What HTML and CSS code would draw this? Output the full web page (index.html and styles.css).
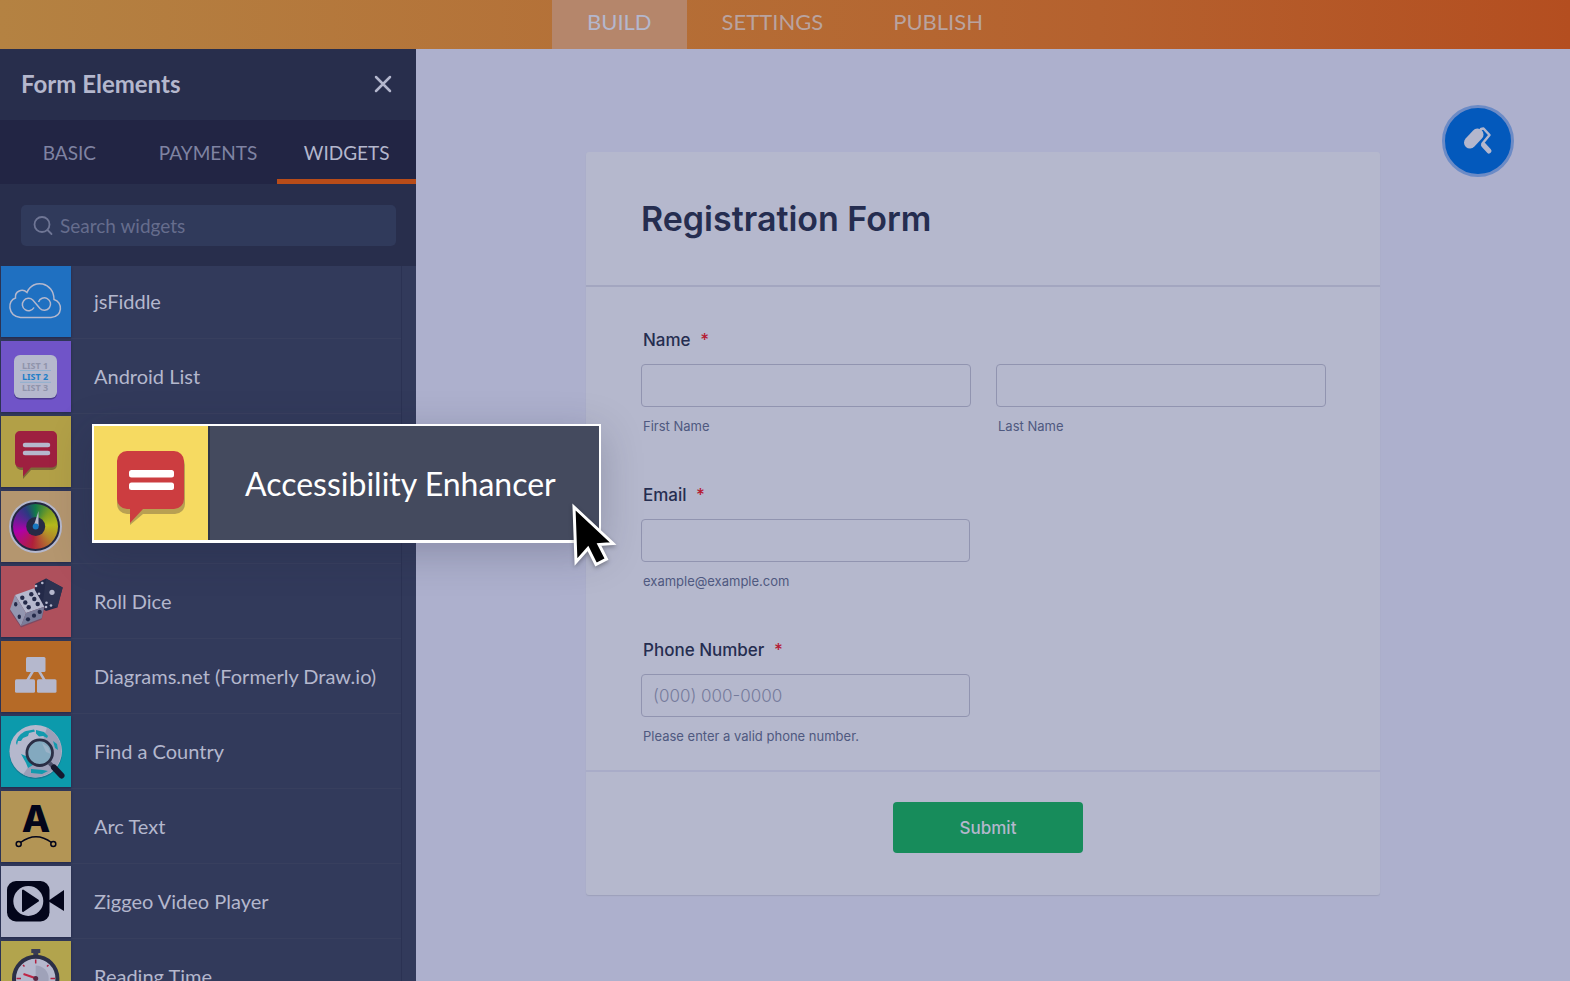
FILE: index.html
```html
<!DOCTYPE html>
<html lang="en" dir="ltr">
<head>
<meta charset="utf-8">
<title>Form Builder</title>
<link rel="stylesheet" href="styles.css">
</head>
<body>
<nav class="topbar">
  <a class="active" href="#build">BUILD</a>
  <a href="#settings">SETTINGS</a>
  <a href="#publish">PUBLISH</a>
</nav>
<div class="wrapper">
  <!-- left panel -->
  <aside class="panel">
    <header class="panel-header">
      <h2>Form Elements</h2>
      <button class="close" type="button" aria-label="Close">
        <svg width="18" height="18" viewBox="0 0 18 18"><path d="M2 2l14 14M16 2L2 16"/></svg>
      </button>
    </header>
    <div class="tabs">
      <button type="button">BASIC</button>
      <button type="button">PAYMENTS</button>
      <button type="button" class="active">WIDGETS</button>
    </div>
    <div class="search">
      <label class="search-box">
        <svg width="20" height="20" viewBox="0 0 20 20"><circle cx="9" cy="8.500" r="7.500"/><path d="M14.500 14l4 4"/></svg>
        <input type="text" placeholder="Search widgets" aria-label="Search widgets">
      </label>
    </div>
    <div class="list">
      <ul>
        <li>
          <svg class="icon blue" viewBox="0 0 70 71">
            <g fill="none" stroke="#b5b8cd" stroke-width="1.500">
              <path d="M19.500 51.500C6 50 6.500 34 14.500 32C13.500 25 21.500 22 26 26.500C32 12 53 16 53 33.500C62 36 62 50.500 50 51.500Z"/>
              <path d="M33 41.500A6.200 6.200 0 1 1 31.800 34L39 42.500A6.200 6.200 0 1 0 37.500 36"/>
            </g>
          </svg>
          <span>jsFiddle</span>
        </li>
        <li>
          <svg class="icon purple" viewBox="0 0 70 71">
            <rect x="13" y="15.500" width="43" height="43" rx="6" fill="#4b3a8f"/>
            <rect x="13" y="14" width="43" height="43" rx="6" fill="#b5b8cd"/>
            <path d="M19 29.500h31M19 41.300h31" stroke="#8fb0cf"/>
            <g class="list-text">
              <text x="34" y="27.500">LIST 1</text>
              <text x="34" y="38.500" fill="#1f7fc8">LIST 2</text>
              <text x="34" y="49.500">LIST 3</text>
            </g>
          </svg>
          <span>Android List</span>
        </li>
        <li>
          <svg class="icon olive" viewBox="0 0 70 71">
            <path d="M20 17h31a5 5 0 0 1 5 5v27a5 5 0 0 1-5 5H30l-8 9v-9h-2a5 5 0 0 1-5-5V22a5 5 0 0 1 5-5z" fill="#7d6b38"/>
            <path d="M19 15h32a5 5 0 0 1 5 5v26.500a5 5 0 0 1-5 5H30l-8 9v-9h-3a5 5 0 0 1-5-5V20a5 5 0 0 1 5-5z" fill="#9e2040"/>
            <path d="M24 29h23M24 37h23" stroke="#b5b8cd" stroke-width="4.500" stroke-linecap="round"/>
          </svg>
          <span></span>
        </li>
        <li>
          <div class="icon sand">
            <div class="wheel"></div>
            <svg viewBox="0 0 70 71">
              <circle cx="34.700" cy="35.500" r="9.500" fill="#262a45"/>
              <path d="M33 34L37.500 20L37.500 35z" fill="#b5b8cd"/>
              <circle cx="34.700" cy="35.500" r="3" fill="#1878c0"/>
            </svg>
          </div>
          <span></span>
        </li>
        <li>
          <svg class="icon rose" viewBox="0 0 70 71">
            <path d="M34 18l11-5.500 16.700 9-5.400 20L45 45 34 38z" fill="#242a49"/>
            <path d="M45 12.500l16.700 9-5.400 20L42 35.500z" fill="#2c3250"/>
            <g fill="#b5b8cd">
              <circle cx="51" cy="26.300" r="2.600"/><circle cx="35" cy="20" r="1.300"/><circle cx="41.300" cy="17" r="1.300"/>
              <circle cx="38" cy="27.700" r="1.300"/><circle cx="45.500" cy="36.800" r="1.300"/><circle cx="50" cy="39.500" r="1.300"/><circle cx="45" cy="41" r="1.300"/>
            </g>
            <path d="M14 30l19-7 10.500 18.500-2.800 12L20 61.500 9 45z" fill="#7d4a62"/>
            <path d="M14 29l19-6.700 10.300 18.400L25 47z" fill="#b5b8cd"/>
            <path d="M14 29l11 18-5 13L9 43.300z" fill="#9396b0"/>
            <path d="M25 47l18.300-6.300-2.600 11.600L20 60z" fill="#797c99"/>
            <g fill="#242a49">
              <circle cx="21.300" cy="31.700" r="2.200"/><circle cx="30.300" cy="28.300" r="2.200"/><circle cx="24.300" cy="36.500" r="2.200"/>
              <circle cx="33.300" cy="33" r="2.200"/><circle cx="27.700" cy="41.300" r="2.200"/><circle cx="36.700" cy="38" r="2.200"/>
              <circle cx="27" cy="53.300" r="2.100"/><circle cx="33" cy="49.700" r="2.100"/><circle cx="38.700" cy="45.900" r="2.100"/>
              <ellipse cx="14.700" cy="38.300" rx="1.700" ry="2.300"/><ellipse cx="18.300" cy="50.700" rx="1.700" ry="2.300"/>
            </g>
          </svg>
          <span>Roll Dice</span>
        </li>
        <li>
          <svg class="icon orange" viewBox="0 0 70 71">
            <path d="M32 30l-6 10M38 30l6 10" stroke="#b5b8cd" stroke-width="2.500"/>
            <g fill="#b5b8cd">
              <rect x="25" y="16" width="19.500" height="15" rx="1.500"/>
              <rect x="14" y="38.300" width="20" height="13.500" rx="1.500"/>
              <rect x="36" y="38.300" width="19.500" height="13.500" rx="1.500"/>
            </g>
          </svg>
          <span>Diagrams.net (Formerly Draw.io)</span>
        </li>
        <li>
          <svg class="icon teal" viewBox="0 0 70 71">
            <circle cx="34.700" cy="36.500" r="26.500" fill="#147c93"/>
            <circle cx="34.700" cy="35.300" r="26.300" fill="#b5b8cd"/>
            <path d="M46 11.500A26.300 26.300 0 0 1 22 58.500L38 36z" fill="#9c9fb8"/>
            <g fill="#129aae">
              <path d="M15 27c1-6 5-10 10-12l8-1.500 1 2-6 1.500-1 3-5 2-2 3-3 0-1 4z"/>
              <path d="M35 14l8 2 4 4-1 2-4-2-4 .5-3-3z"/>
              <path d="M52 25l4 3 1 6-3-2z"/>
              <path d="M20 38l7 3 5 8-5 3-2-5z"/>
              <path d="M30 53l12 1 5 1-6 3-11-1z"/>
            </g>
            <circle cx="38.700" cy="36.700" r="12.500" fill="#83a9bf"/>
            <path d="M41 27l6 4 3 7-5-2z" fill="#9cb3c8"/>
            <circle cx="38.700" cy="36.700" r="12.800" fill="none" stroke="#2a2e45" stroke-width="2.800"/>
            <path d="M48.500 47l4 4" stroke="#4a4e68" stroke-width="4"/>
            <path d="M53 51.500l7.500 8" stroke="#15182e" stroke-width="6" stroke-linecap="round"/>
          </svg>
          <span>Find a Country</span>
        </li>
        <li>
          <svg class="icon gold" viewBox="0 0 70 71">
            <text class="arc-letter" x="35" y="41">A</text>
            <g fill="none" stroke="#03051a" stroke-width="1.500">
              <path d="M19.500 51.500Q35 40 50.500 51.500"/>
              <circle cx="17.700" cy="53" r="2.500"/><circle cx="52.300" cy="53" r="2.500"/>
            </g>
          </svg>
          <span>Arc Text</span>
        </li>
        <li>
          <svg class="icon light" viewBox="0 0 70 71">
            <rect x="6" y="15" width="42.500" height="40.500" rx="9" fill="#03051a"/>
            <circle cx="27.300" cy="35" r="15" fill="#b5b8cd"/>
            <path d="M22 24.500v20.500l15-10.300z" fill="#03051a" stroke="#03051a" stroke-width="2" stroke-linejoin="round"/>
            <path d="M47 35l16-11v21z" fill="#03051a"/>
          </svg>
          <span>Ziggeo Video Player</span>
        </li>
        <li>
          <svg class="icon lime" viewBox="0 0 70 71">
            <path d="M30.300 8h9v4h-2v4h-5v-4h-2z" fill="#383c54"/>
            <circle cx="34.700" cy="37.500" r="21.700" fill="#b5b8cd" stroke="#2b2f47" stroke-width="4"/>
            <path d="M34.700 24.500a13 13 0 0 1 0 26z" fill="#9fa2b9"/>
            <path d="M34.700 18.500v4M15.500 37.500h4.500M49.500 37.500h4.500M22 24l1.500 1.500M47.500 24L46 25.500" stroke="#b02040" stroke-width="1.500"/>
            <path d="M22.500 33l13 4.500" stroke="#c02445" stroke-width="2"/>
            <circle cx="34.700" cy="37.500" r="2.500" fill="#5a2a45"/>
          </svg>
          <span>Reading Time</span>
        </li>
      </ul>
    </div>
  </aside>

  <!-- form preview -->
  <main class="stage">
    <form class="form">
      <div class="form-head">
        <h1>Registration Form</h1>
      </div>
      <div class="form-body">
        <fieldset>
          <legend>Name <b>*</b></legend>
          <div class="names">
            <div><input id="first" type="text"><label class="sub" for="first">First Name</label></div>
            <div><input id="last" type="text"><label class="sub" for="last">Last Name</label></div>
          </div>
        </fieldset>
        <div class="field">
          <label for="email">Email <b>*</b></label>
          <input id="email" type="email">
          <p class="sub">example@example.com</p>
        </div>
        <div class="field">
          <label for="phone">Phone Number <b>*</b></label>
          <input id="phone" type="tel" placeholder="(000) 000-0000">
          <p class="sub">Please enter a valid phone number.</p>
        </div>
      </div>
      <div class="form-foot">
        <button type="button">Submit</button>
      </div>
    </form>
    <button class="designer" type="button" aria-label="Form Designer">
      <svg width="30" height="30" viewBox="0 0 30 30">
        <path d="M7 16.500L14.500 8.500" stroke-width="12"/>
        <path d="M18 3l2.500-.5 6 6.500-7 8.500" stroke-width="2.500"/>
        <path d="M20.500 19l5.500 6" stroke-width="5"/>
      </svg>
    </button>
  </main>
</div>

<!-- widget being dragged -->
<div class="drag">
  <svg viewBox="0 0 114 114">
    <path d="M33 29h48a10 10 0 0 1 10 10v39a10 10 0 0 1-10 10H49L36 99V88h-3a10 10 0 0 1-10-10V39a10 10 0 0 1 10-10z" fill="#b8a052"/>
    <path d="M33 25h47a10 10 0 0 1 10 10v38a10 10 0 0 1-10 10H49L36 97V83h-3a10 10 0 0 1-10-10V35a10 10 0 0 1 10-10z" fill="#cc3d40"/>
    <rect x="35" y="44" width="45" height="7.500" rx="2.500" fill="#fff"/>
    <rect x="35" y="56.500" width="45" height="7.500" rx="2.500" fill="#fff"/>
  </svg>
  <span>Accessibility Enhancer</span>
</div>
<svg class="cursor" width="54" height="72" viewBox="0 0 54 72">
  <path d="M5 6l2 55 12-13.500 8 16 10.500-5.500-7.500-14.500 14-1z"/>
</svg>
</body>
</html>
```
FILE: styles.css
```css
*{box-sizing:border-box;}
body{margin:0; height:100vh; display:flex; flex-direction:column; overflow:hidden; position:relative; background:#adb0cd; font-family:Lato, "Liberation Sans", sans-serif; color:#b4b7cd;}
button, input{font-family:inherit;}
button{border:none; background:none; padding:0; color:inherit; cursor:pointer;}
h1, h2, p, ul, fieldset, legend{margin:0; padding:0; border:0;}
ul{list-style:none;}

/*--Top bar--*/
.topbar{flex:none; display:flex; justify-content:center; height:49px; background:linear-gradient(90deg, #b48242, #b5612e 70%, #b44e20);}
.topbar a{padding:0 35px; font-size:22px; line-height:44px; color:#b9a3a0; text-decoration:none;}
.topbar a.active{background:#b5866b; color:#b4b7cd;}

.wrapper{flex:1; min-height:0; display:flex;}

/*--Left panel--*/
.panel{flex:none; width:416px; display:flex; flex-direction:column; background:#282e4c;}
.panel-header{flex:none; display:flex; align-items:center; justify-content:space-between; height:71px; padding:0 24px 2px 21px;}
.panel-header h2{font-size:24px; font-weight:bold;}
.close svg{display:block; fill:none; stroke:#b4b7cd; stroke-width:2.5; stroke-linecap:round;}
.tabs{flex:none; display:flex; height:64px; background:#222544;}
.tabs button{flex:1; border-top:5px solid transparent; border-bottom:5px solid transparent; font-size:19px; color:#7f83a2;}
.tabs button.active{border-bottom-color:#b84c19; color:#b4b7cd;}
.search{flex:none; padding:21px 20px 20px 21px;}
.search-box{display:flex; align-items:center; gap:7px; height:41px; padding:0 12px; border-radius:5px; background:#303a5b;}
.search-box svg{flex:none; fill:none; stroke:#6f7695; stroke-width:1.8; stroke-linecap:round;}
.search-box input{flex:1; min-width:0; border:none; outline:none; background:none; padding:0; font-size:19px; color:#b4b7cd;}
.search-box input::placeholder{color:#666d8d;}

.list{flex:1; min-height:0; overflow:hidden; padding-right:14px; background:#323a5b;}
.list ul{border-right:1px solid #2b3253;}
.list li{display:flex; height:75px; padding-left:1px;}
.list span{flex:1; height:73px; padding-left:23px; border-bottom:1px solid #383f5e; font-size:20px; line-height:71px;}
.icon{flex:none; display:block; width:70px; height:71px; position:relative; box-shadow:0 1px 2px #22284a;}
.icon svg{position:absolute; top:0; left:0; width:70px; height:71px;}
.blue{background:#1f70c1;}
.purple{background:#7054c8;}
.olive{background:#b2a047;}
.sand{background:#b4966f;}
.rose{background:#ae505c;}
.orange{background:#b56a27;}
.teal{background:#0c9aac;}
.gold{background:#b39555;}
.light{background:#b5b8cd;}
.lime{background:#b2a44d;}
.list-text{font:bold 9px "Noto Sans", sans-serif; text-anchor:middle; fill:#9094ab;}
.arc-letter{font:800 37px Inter, sans-serif; text-anchor:middle; fill:#03051a;}
.wheel{width:53px; height:53px; margin:9px 8px; border:2px solid #b5b8cd; border-radius:50%; padding:2px; background:#232741;}
.wheel:before{content:""; display:block; height:100%; border-radius:50%; background:conic-gradient(#12794a, #7f9f22 45deg, #b5b91c 85deg, #b3862c 130deg, #b0203a 190deg, #b000a8 255deg, #5a2494 300deg, #2a3a80 330deg, #12794a);}

.sand{display:flow-root;}

/*--Form preview--*/
.stage{flex:1; position:relative; padding:103px 190px 0 170px; font-family:Inter, "Liberation Sans", sans-serif;}
.form{border-radius:3px; background:#b5b8cd; box-shadow:0 1px 1px #9da0bb; color:#252d50;}
.form-head{padding:45px 55px; border-bottom:2px solid #a3a6c0;}
.form-head h1{font-size:34px; font-weight:600; line-height:43px;}
.form-body{display:flex; flex-direction:column; gap:49px; padding:41px 54px 26px 55px; border-bottom:2px solid #a9acc8;}
.form-body legend, .field label{display:block; padding-left:2px; font-size:17px; font-weight:500; line-height:24px;}
.form-body b{margin-left:5px; font-weight:500; color:#b51c35;}
.form-body input{display:block; width:100%; height:43px; margin-top:12px; padding:0 11px; border:1px solid #9194b0; border-radius:4px; background:transparent; font-size:17px;}
.form-body input::placeholder{color:#757b9c; font-weight:300;}
.names{display:grid; grid-template-columns:1fr 1fr; gap:25px;}
.form-body .field input{width:48%;}
.form-body .sub{display:block; margin-top:11px; padding-left:2px; font-size:13px; font-weight:400; line-height:16px; color:#4f5980;}
.form-foot{padding:30px 0 42px 10px; text-align:center;}
.form-foot button{display:block; width:190px; height:51px; margin:0 auto; border-radius:4px; background:#178c5b; font-size:17px; font-weight:500; color:#b4b7cd;}
.designer{position:absolute; top:56px; right:56px; display:flex; align-items:center; justify-content:center; width:72px; height:72px; border:3px solid #6c8bc6; border-radius:50%; background:#0359bc;}
.designer svg{flex:none; fill:none; stroke:#b4b7cd; stroke-linecap:round; stroke-linejoin:round;}

/*--Dragged widget--*/
.drag{position:absolute; top:424px; left:92px; display:flex; width:509px; height:119px; border:2px solid #fff; border-bottom-width:3px; background:#444a5e; box-shadow:0 10px 40px rgba(30,35,60,.25);}
.drag svg{flex:none; width:116px; height:114px; border-right:2px solid #2f3547; background:#f6da61;}
.drag span{padding-left:35px; font-size:32px; line-height:116px; color:#fff;}
.cursor{position:absolute; top:501px; left:569px; fill:#000; stroke:#fff; stroke-width:3; filter:drop-shadow(0 2px 2px rgba(0,0,0,.3));}
```
